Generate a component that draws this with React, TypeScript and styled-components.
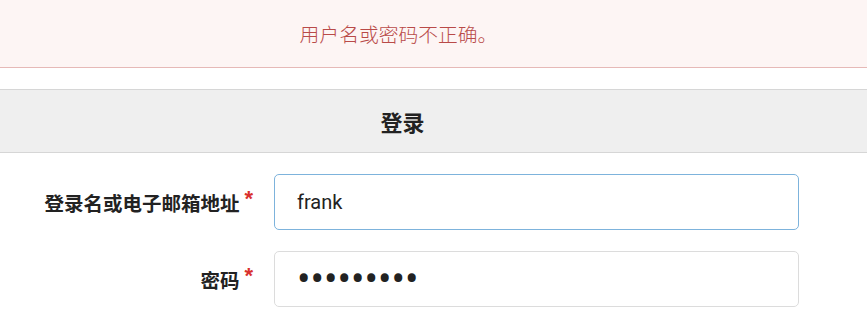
import styled, { createGlobalStyle } from "styled-components";

const GlobalStyle = createGlobalStyle`
  body {
    margin: 0;
    background: #ffffff;
    font-family: Roboto, "Noto Sans CJK SC", sans-serif;
  }
`;

const Page = styled.div`
  width: 100%;
  display: flex;
  flex-direction: column;
`;

const Alert = styled.div`
  height: 67px;
  background: #fdf5f4;
  border-bottom: 1px solid #e6b9b7;
  display: flex;
  align-items: center;
  justify-content: center;
  padding-right: 70px;
  color: #b94a48;
  font-family: "Noto Sans CJK SC", sans-serif;
  font-weight: 300;
  font-size: 19.8px;
`;

const Panel = styled.div`
  margin-top: 21px;
`;

const PanelHead = styled.div`
  height: 62px;
  background: #efefef;
  border-top: 1px solid #d6d6d6;
  border-bottom: 1px solid #d6d6d6;
  display: flex;
  align-items: center;
  justify-content: center;
  padding-right: 62px;
  color: #222;
  font-family: "Noto Sans CJK SC", sans-serif;
  font-weight: 700;
  font-size: 22px;
`;

const Form = styled.form`
  display: grid;
  grid-template-columns: 253px 525px;
  column-gap: 21px;
  row-gap: 21px;
  padding-top: 21px;
`;

const Label = styled.label`
  display: flex;
  align-items: center;
  justify-content: flex-end;
  gap: 5px;
  color: #222;
  font-family: "Noto Sans CJK SC", sans-serif;
  font-weight: 700;
  font-size: 19.5px;
`;

const Required = styled.span`
  color: #d9302c;
  font-family: "Liberation Sans", sans-serif;
  font-size: 22px;
  font-weight: 700;
  position: relative;
  top: -3px;
`;

const Input = styled.input<{ $focused?: boolean }>`
  box-sizing: border-box;
  height: 56px;
  width: 100%;
  padding: 0 22px;
  border: 1px solid ${(p) => (p.$focused ? "#7db3dc" : "#dcdcdc")};
  border-radius: 5px;
  background: #fff;
  color: #222;
  font-family: Roboto, sans-serif;
  font-size: ${(p) => (p.type === "password" ? "40px" : "20px")};
  outline: none;
`;

export default function App() {
  return (
    <Page>
      <GlobalStyle />
      <Alert>用户名或密码不正确。</Alert>
      <Panel>
        <PanelHead>登录</PanelHead>
        <Form>
          <Label>
            登录名或电子邮箱地址<Required>*</Required>
          </Label>
          <Input $focused type="text" value="frank" readOnly />
          <Label>
            密码<Required>*</Required>
          </Label>
          <Input type="password" value="123456789" readOnly />
        </Form>
      </Panel>
    </Page>
  );
}
